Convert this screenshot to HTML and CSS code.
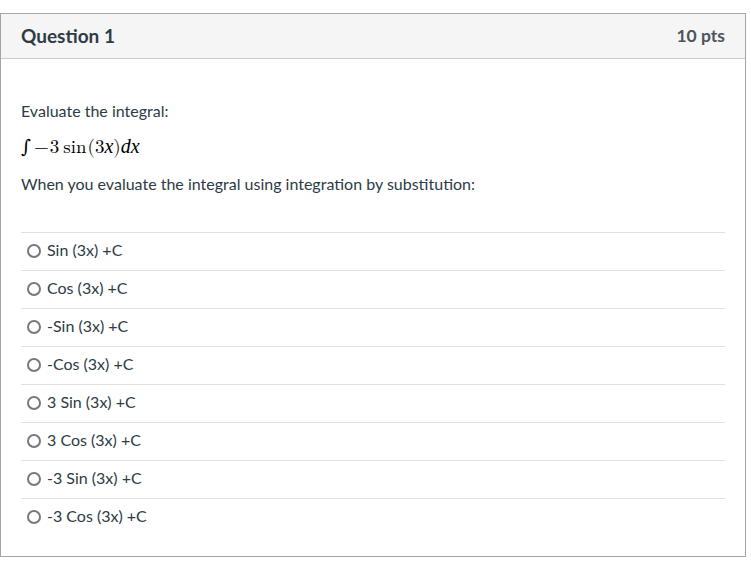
FILE: index.html
```html
<!DOCTYPE html>
<html>
<head>
<meta charset="utf-8">
<link rel="stylesheet" href="styles.css">
</head>
<body>
<div class="question">
  <div class="q-header">
    <span class="q-title">Question 1</span>
    <span class="q-pts">10 pts</span>
  </div>
  <div class="q-body">
    <p class="q-text">Evaluate the integral:</p>
    <p class="q-math"><span class="int">∫</span><span class="minus">−</span>3<span class="fn">sin</span>(3<i>x</i>)<i>dx</i></p>
    <p class="q-text">When you evaluate the integral using integration by substitution:</p>
    <div class="answers">
      <label class="answer"><span class="radio"></span>Sin (3x) +C</label>
      <label class="answer"><span class="radio"></span>Cos (3x) +C</label>
      <label class="answer"><span class="radio"></span>-Sin (3x) +C</label>
      <label class="answer"><span class="radio"></span>-Cos (3x) +C</label>
      <label class="answer"><span class="radio"></span>3 Sin (3x) +C</label>
      <label class="answer"><span class="radio"></span>3 Cos (3x) +C</label>
      <label class="answer"><span class="radio"></span>-3 Sin (3x) +C</label>
      <label class="answer"><span class="radio"></span>-3 Cos (3x) +C</label>
    </div>
  </div>
</div>
</body>
</html>
```
FILE: styles.css
```css
html, body {
  margin: 0;
  padding: 0;
  background: #ffffff;
}
body {
  font-family: Lato, "Liberation Sans", sans-serif;
  color: #2d3b45;
  padding-top: 13px;
}
.question {
  width: 744px;
  border: 1px solid #a5a5a5;
  box-sizing: content-box;
}
.q-header {
  height: 44px;
  background: #f5f5f5;
  border-bottom: 1px solid #c7cdd1;
  display: flex;
  align-items: center;
  justify-content: space-between;
  padding: 0 20px;
}
.q-title {
  font-size: 19px;
  font-weight: 700;
  color: #2d3b45;
  margin-top: -2px;
}
.q-pts {
  font-size: 17.5px;
  font-weight: 700;
  color: #4d5459;
  margin-top: -2px;
}
.q-body {
  padding: 40px 20px 20px 20px;
}
.q-text {
  margin: 0;
  font-size: 16px;
  line-height: 24px;
}
.q-math {
  margin: 11px 0 12px 0;
  font-family: "Latin Modern Math", "DejaVu Serif", "Liberation Serif", serif;
  font-size: 19px;
  line-height: 24px;
  color: #000;
}
.q-math .int {
  font-size: 19px;
  margin-right: 3px;
  font-family: "DejaVu Serif", serif;
}
.q-math .minus {
  margin-right: 1px;
}
.q-math .fn {
  margin: 0 1px 0 4px;
}
.q-math i {
  font-family: "Liberation Serif", serif;
  font-size: 20px;
}
.answers {
  margin-top: 36px;
}
.answer {
  display: flex;
  align-items: center;
  height: 33px;
  padding-bottom: 4px;
  border-top: 1px solid #dfe1e3;
  font-size: 16px;
  color: #2d3b45;
  box-sizing: content-box;
}
.radio {
  width: 10px;
  height: 10px;
  border: 2px solid #74797d;
  border-radius: 50%;
  margin: 3px 6px 0 6px;
  flex: none;
}
```
